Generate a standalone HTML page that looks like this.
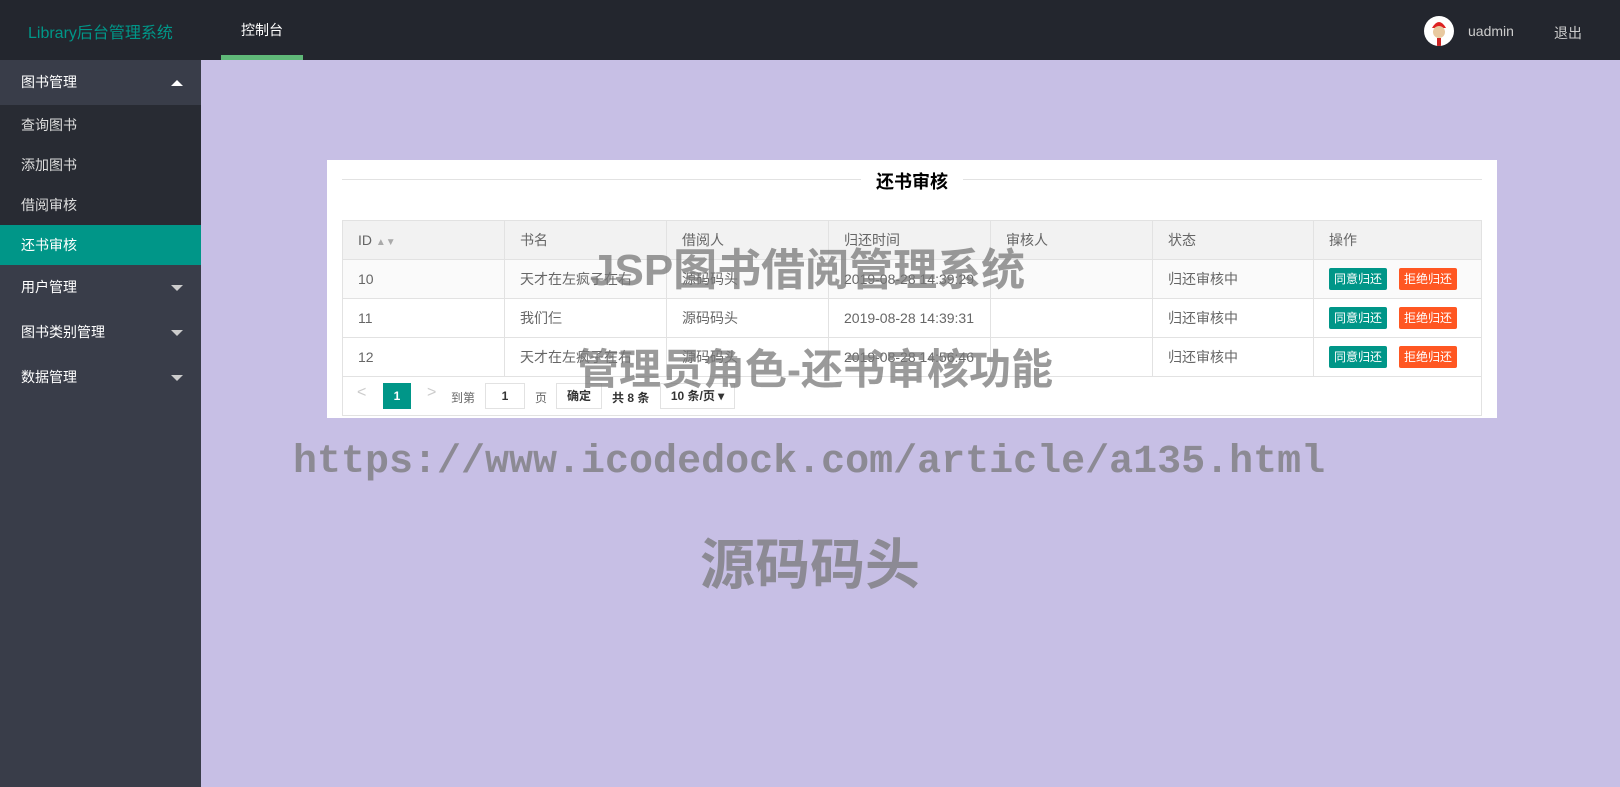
<!DOCTYPE html>
<html><head><meta charset="utf-8"><style>
*{margin:0;padding:0;box-sizing:border-box}
body{width:1620px;height:787px;overflow:hidden;background:#C7BFE5;font-family:"Liberation Sans","Noto Sans CJK SC",sans-serif;font-size:14px;position:relative}
.hd{position:absolute;left:0;top:0;width:1620px;height:60px;background:#23262E}
.logo{position:absolute;left:28px;top:19px;color:#009688;font-size:16px}
.nav{position:absolute;left:221px;top:0;width:82px;height:60px;color:#fff;text-align:center;line-height:60px;font-size:14px}
.nav:after{content:"";position:absolute;left:0;bottom:0;width:82px;height:5px;background:#5FB878}
.av{position:absolute;left:1424px;top:16px;width:30px;height:30px;border-radius:50%;background:#fff;overflow:hidden}
.un{position:absolute;left:1468px;top:23px;color:#ccc}
.out{position:absolute;left:1554px;top:23px;color:#ccc}
.sb{position:absolute;left:0;top:60px;width:201px;height:727px;background:#393D49}
.it{height:45px;line-height:45px;padding-left:21px;color:#fff;position:relative}
.sub{background:#282B33}
.sub div{height:40px;line-height:40px;padding-left:21px;color:#ddd}
.sub .on{background:#009688;color:#fff}
.tri{position:absolute;right:18px;top:20px;border:6px solid transparent;border-top-color:#ccc}
.up{top:14px;border-top-color:transparent;border-bottom-color:#fff}
.card{position:absolute;left:327px;top:160px;width:1170px;height:258px;background:#fff}
.line{position:absolute;left:15px;right:15px;top:19px;border-top:1px solid #e2e2e2}
.ttl{position:absolute;left:0;right:0;top:8px;text-align:center;font-size:18px;font-weight:bold}
.ttl span{background:#fff;padding:0 15px}
table{position:absolute;left:15px;top:60px;width:1140px;border-collapse:collapse;color:#666}
td,th{border:1px solid #e2e2e2;height:39px;padding-left:15px;text-align:left;font-weight:normal;font-size:14px}
th{background:#f2f2f2}
tr.a td{background:#fafafa}
.b{display:inline-block;color:#fff;font-size:12px;height:22px;line-height:22px;padding:0 5px;border-radius:2px}
.g{background:#009688}.r{background:#FF5722;margin-left:12px}
.pg{position:absolute;left:15px;top:216px;width:1140px;height:40px;border:1px solid #e2e2e2;border-top:none;font-size:12px;color:#666}
.pg span{position:absolute;top:9px}
.bx{border:1px solid #e2e2e2;height:26px;line-height:24px;text-align:center;top:7px!important}
.wm{position:absolute;color:rgba(120,120,120,.75);font-weight:bold;white-space:nowrap}
</style></head><body>
<div class="hd"><div class="logo">Library后台管理系统</div><div class="nav">控制台</div>
<div class="av"><svg width="30" height="30"><path d="M8 12 Q15 0 22 12Z" fill="#d22"/><circle cx="15" cy="16" r="6" fill="#e8c9a0"/><rect x="13" y="22" width="4" height="8" fill="#c22"/></svg></div>
<div class="un">uadmin</div><div class="out">退出</div></div>
<div class="sb">
<div class="it">图书管理<i class="tri up"></i></div>
<div class="sub"><div>查询图书</div><div>添加图书</div><div>借阅审核</div><div class="on">还书审核</div></div>
<div class="it">用户管理<i class="tri"></i></div>
<div class="it">图书类别管理<i class="tri"></i></div>
<div class="it">数据管理<i class="tri"></i></div>
</div>
<div class="card"><div class="line"></div><div class="ttl"><span>还书审核</span></div>
<table>
<tr><th style="width:162px">ID <span style="color:#aaa;font-size:10px">▲▼</span></th><th style="width:162px">书名</th><th style="width:162px">借阅人</th><th style="width:162px">归还时间</th><th style="width:162px">审核人</th><th style="width:161px">状态</th><th>操作</th></tr>
<tr class="a"><td>10</td><td>天才在左疯子在右</td><td>源码码头</td><td>2019-08-28 14:39:29</td><td></td><td>归还审核中</td><td><span class="b g">同意归还</span><span class="b r">拒绝归还</span></td></tr>
<tr><td>11</td><td>我们仨</td><td>源码码头</td><td>2019-08-28 14:39:31</td><td></td><td>归还审核中</td><td><span class="b g">同意归还</span><span class="b r">拒绝归还</span></td></tr>
<tr><td>12</td><td>天才在左疯子在右</td><td>源码码头</td><td>2019-08-28 14:56:46</td><td></td><td>归还审核中</td><td><span class="b g">同意归还</span><span class="b r">拒绝归还</span></td></tr>
</table>
<div class="pg"><span style="left:14px;color:#ccc;font-size:16px;top:8px">&lt;</span><span class="bx" style="left:40px;width:28px;background:#009688;color:#fff;border-color:#009688;font-weight:bold">1</span><span style="left:84px;color:#ccc;font-size:16px;top:8px">&gt;</span><span style="left:108px;top:13px">到第</span><span class="bx" style="left:142px;width:40px;color:#333;font-weight:bold">1</span><span style="left:192px;top:13px">页</span><span class="bx" style="left:213px;width:46px;color:#333;font-weight:bold">确定</span><span style="left:269px;top:13px;color:#333;font-weight:bold">共 8 条</span><span class="bx" style="left:317px;width:75px;color:#333;font-weight:bold">10 条/页 ▾</span></div>
</div>
<div class="wm" style="left:590px;top:234px;font-size:44px">JSP图书借阅管理系统</div>
<div class="wm" style="left:577px;top:336px;font-size:42px">管理员角色-还书审核功能</div>
<div class="wm" style="left:293px;top:440px;font-size:40px;font-family:'Liberation Mono',monospace">https://www.icodedock.com/article/a135.html</div>
<div class="wm" style="left:700px;top:520px;font-size:55px">源码码头</div>
</body></html>
